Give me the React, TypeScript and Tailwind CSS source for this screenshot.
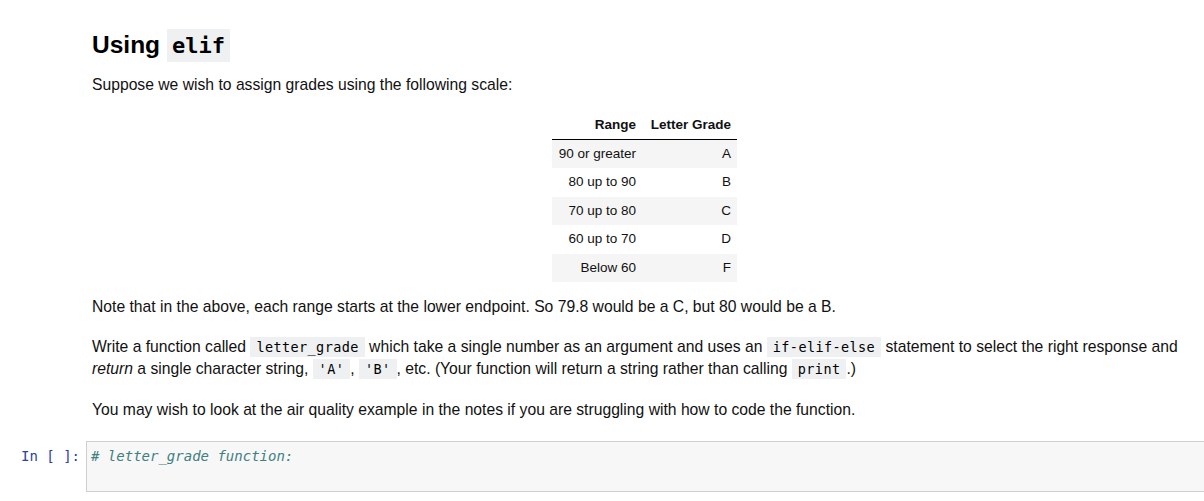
const rows = [
  { range: "90 or greater", grade: "A" },
  { range: "80 up to 90", grade: "B" },
  { range: "70 up to 80", grade: "C" },
  { range: "60 up to 70", grade: "D" },
  { range: "Below 60", grade: "F" },
];

function Code({ children }: { children: React.ReactNode }) {
  return (
    <code className="bg-[#eff0f1] px-[6px] py-[2px] font-['DejaVu_Sans_Mono',monospace] text-[13.5px] tracking-[0.4px] text-black">
      {children}
    </code>
  );
}

export default function App() {
  return (
    <div className="w-[1204px] h-[501px] overflow-hidden bg-white font-['Liberation_Sans',Arial,sans-serif] text-[#111]">
      <div className="pl-[92px] pr-[7px]">
        <h2 className="mt-[28px] flex h-[34px] items-center gap-[7px] text-[24.5px] font-bold text-black">
          <span>Using</span>
          <code className="bg-[#eff0f1] px-[5px] leading-[33px] font-['DejaVu_Sans_Mono',monospace] text-[22px] font-bold">
            elif
          </code>
        </h2>

        <p className="mt-[11.5px] text-[15.7px] leading-[21px]">
          Suppose we wish to assign grades using the following scale:
        </p>

        <table className="mx-auto mt-[16.5px] border-collapse text-[13.5px] table-fixed">
          <thead>
            <tr className="h-[28.5px] border-b border-black">
              <th className="w-[90px] pr-[6px] text-right font-bold">Range</th>
              <th className="w-[95px] pr-[6px] text-right font-bold">Letter Grade</th>
            </tr>
          </thead>
          <tbody>
            {rows.map((r, i) => (
              <tr key={r.grade} className={`h-[28.5px] ${i % 2 === 0 ? "bg-[#f5f5f5]" : ""}`}>
                <td className="pr-[6px] text-right">{r.range}</td>
                <td className="pr-[6px] text-right">{r.grade}</td>
              </tr>
            ))}
          </tbody>
        </table>

        <p className="mt-[14px] text-[15.7px] leading-[21px]">
          Note that in the above, each range starts at the lower endpoint. So 79.8 would be a C, but 80 would be a B.
        </p>

        <p className="mt-[19px] text-[15.7px] leading-[21px]">
          Write a function called <Code>letter_grade</Code> which take a single number as an argument and uses an{" "}
          <Code>if-elif-else</Code> statement to select the right response and <em>return</em> a single character
          string, <Code>'A'</Code>, <Code>'B'</Code>, etc. (Your function will return a string rather than calling{" "}
          <Code>print</Code>.)
        </p>

        <p className="mt-[19px] text-[15.7px] leading-[21px]">
          You may wish to look at the air quality example in the notes if you are struggling with how to code the
          function.
        </p>
      </div>

      {/* code cell */}
      <div className="mt-[21px] flex">
        <div className="w-[86px] shrink-0 pr-[6px] pt-[7px] text-right font-['DejaVu_Sans_Mono',monospace] text-[14px] leading-[17px] text-[#303f9f]">
          In&nbsp;[&nbsp;]:
        </div>
        <div className="h-[51px] w-[1200px] shrink-0 border border-[#cfcfcf] bg-[#f7f7f7] pl-[4px] pt-[6px] font-['DejaVu_Sans_Mono',monospace] text-[14px] leading-[17px]">
          <span className="italic text-[#408080]"># letter_grade function:</span>
        </div>
      </div>
    </div>
  );
}
